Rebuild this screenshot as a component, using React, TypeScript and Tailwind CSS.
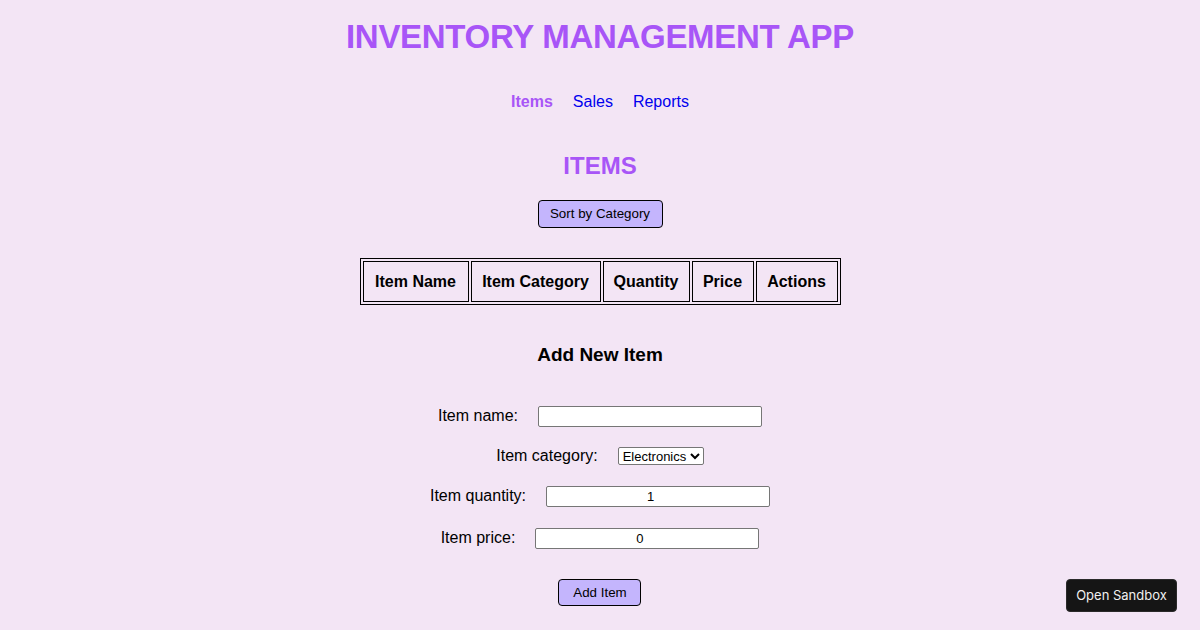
import React, { useState } from "react";

const headers = [
  { label: "Item Name", width: "w-[106px]" },
  { label: "Item Category", width: "w-[130px]" },
  { label: "Quantity", width: "w-[87px]" },
  { label: "Price", width: "w-[62px]" },
  { label: "Actions", width: "w-[82px]" },
];

const App: React.FC = () => {
  const [name, setName] = useState("");
  const [category, setCategory] = useState("Electronics");
  const [quantity, setQuantity] = useState("1");
  const [price, setPrice] = useState("0");

  return (
    <div className="min-h-[630px] w-full bg-[#f3e5f5] font-['Liberation_Sans',Arial,sans-serif] text-black relative">
      <div className="flex flex-col items-center pt-[17px]">
        <h1 className="text-[33px] leading-[40px] font-bold tracking-[-0.3px] text-[#a855f7]">
          INVENTORY MANAGEMENT APP
        </h1>

        <nav className="mt-[33px] flex gap-5 text-base leading-6">
          <a href="#" className="font-bold text-[#a855f7]">
            Items
          </a>
          <a href="#" className="text-[#0000ee]">
            Sales
          </a>
          <a href="#" className="text-[#0000ee]">
            Reports
          </a>
        </nav>

        <h2 className="mt-[36px] text-2xl leading-8 font-bold text-[#a855f7]">ITEMS</h2>

        <button className="mt-[18px] h-[28px] w-[125px] rounded-[4px] border border-black bg-[#c4b5fd] text-[13.33px] leading-none">
          Sort by Category
        </button>

        <table className="mt-[30px] border-separate border-spacing-[2px] border border-black">
          <thead>
            <tr>
              {headers.map((h) => (
                <th
                  key={h.label}
                  className={`${h.width} border border-black px-0 py-[10px] text-center text-base leading-[19px] font-bold`}
                >
                  {h.label}
                </th>
              ))}
            </tr>
          </thead>
          <tbody></tbody>
        </table>

        <h3 className="mt-[38px] text-[19px] leading-6 font-bold">Add New Item</h3>

        <form className="flex flex-col items-center" onSubmit={(e) => e.preventDefault()}>
          <div className="mt-[37px] flex h-6 items-center gap-5">
            <label className="text-base leading-6">Item name:</label>
            <input
              type="text"
              value={name}
              onChange={(e) => setName(e.target.value)}
              className="h-[21px] w-[224px] rounded-[2px] border border-[#767676] bg-white px-[2px] text-[13px]"
            />
          </div>

          <div className="mt-[16px] flex h-6 items-center gap-5">
            <label className="text-base leading-6">Item category:</label>
            <select
              value={category}
              onChange={(e) => setCategory(e.target.value)}
              className="h-[18px] rounded-[2px] border border-[#767676] bg-white text-[13px] leading-none"
            >
              <option>Electronics</option>
              <option>Clothing</option>
              <option>Groceries</option>
            </select>
          </div>

          <div className="mt-[16px] flex h-6 items-center gap-5">
            <label className="text-base leading-6">Item quantity:</label>
            <input
              type="number"
              value={quantity}
              onChange={(e) => setQuantity(e.target.value)}
              className="h-[21px] w-[224px] rounded-[2px] border border-[#767676] bg-white px-[2px] text-center text-[13px]"
            />
          </div>

          <div className="mt-[18px] flex h-6 items-center gap-5">
            <label className="text-base leading-6">Item price:</label>
            <input
              type="number"
              value={price}
              onChange={(e) => setPrice(e.target.value)}
              className="h-[21px] w-[224px] rounded-[2px] border border-[#767676] bg-white px-[2px] text-center text-[13px]"
            />
          </div>

          <button
            type="submit"
            className="mt-[29px] h-[27px] w-[83px] rounded-[4px] border border-black bg-[#c4b5fd] text-[13.33px] leading-none"
          >
            Add Item
          </button>
        </form>
      </div>

      <button className="absolute right-[23px] bottom-[18px] h-[33px] w-[111px] rounded-[4px] border border-[#2a2a2a] bg-[#151515] font-['Inter',sans-serif] text-[13px] text-[#f0f0f0]">
        Open Sandbox
      </button>
    </div>
  );
};

export default App;
